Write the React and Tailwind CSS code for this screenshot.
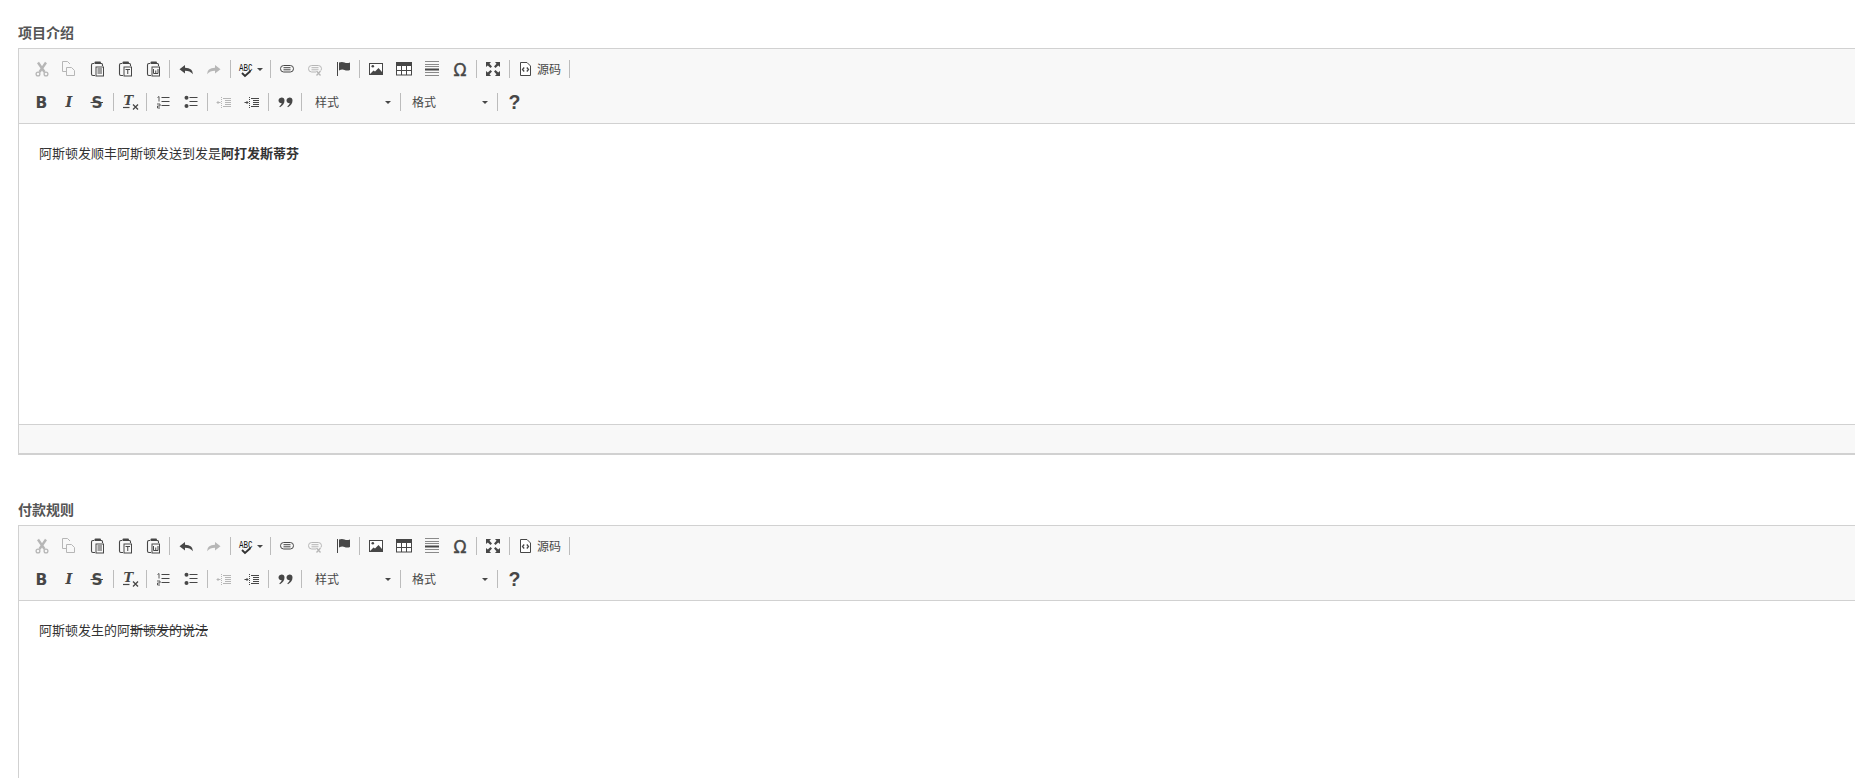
import React from "react";

const C = "#474747";
const D = "#222";
const I = ({ children, off }) => (
  <svg width="16" height="16" viewBox="0 0 16 16" fill="none" className={`overflow-visible ${off ? "opacity-30" : ""}`}>
    {children}
  </svg>
);
const G = ({ x, y, size, family = "DejaVu Sans", weight = "bold", style = "normal", stroke, children }) => (
  <text x={x} y={y} fontSize={size} fontFamily={family} fontWeight={weight} fontStyle={style} fill={C} stroke={stroke} strokeWidth={stroke ? 0.35 : undefined}>
    {children}
  </text>
);

const Cut = () => (
  <I off>
    <path d="M5 1.500l6.500 9.500M13 1.500L6.500 11" stroke={D} strokeWidth="2.400" />
    <circle cx="5" cy="13" r="1.900" stroke={D} strokeWidth="1.300" />
    <circle cx="13" cy="13" r="1.900" stroke={D} strokeWidth="1.300" />
  </I>
);
const Copy = () => (
  <I off>
    <path d="M5 10.500H1.500V.5H6.500L9 3" stroke={D} />
    <path d="M5.500 6.500V14.500H13.500V9.500L10.500 6.500Z" stroke={D} />
  </I>
);
const Clip = ({ children }) => (
  <I>
    <path d="M5 2.500H4Q2.500 2.500 2.500 4v9Q2.500 14.500 4 14.500h2" stroke={C} strokeWidth="1.100" />
    <path d="M12 2.500h.5Q13.500 2.500 13.500 4v1" stroke={C} strokeWidth="1.100" />
    <path d="M5.500 3V1.500Q5.500.5 6.500.5h4.500Q12 .5 12 1.500V3z" fill={C} />
    <rect x="7" y="6" width="7.500" height="9" fill="#f8f8f8" stroke={C} />
    {children}
  </I>
);
const Paste = () => (
  <Clip>
    <path d="M8.500 8h4.500M8.500 10h4.500M8.500 12h4.500" stroke={C} />
  </Clip>
);
const PasteT = () => (
  <Clip>
    <path d="M8.500 8.500h4.500M10.750 8.500v4.500" stroke={C} />
  </Clip>
);
const PasteW = () => (
  <Clip>
    <path d="M8.500 8v4.500h4.500V8M10.750 9.500v3" stroke={C} />
  </Clip>
);
const Undo = () => (
  <I>
    <path d="M7 4L1.500 8.200 7 12.500V9.800q5 0 8 3.400Q15 6.800 7 6.700z" fill={C} />
  </I>
);
const Redo = () => (
  <I off>
    <path d="M9 4l5.500 4.200L9 12.500V9.800q-5 0-8 3.400Q1 6.800 9 6.700z" fill={D} />
  </I>
);
const Spell = () => (
  <I>
    <text x="1" y="9.500" fontSize="10.500" textLength="13.500" lengthAdjust="spacingAndGlyphs" fontFamily="Liberation Mono" fill="#111">ABC</text>
    <path d="M4 12l3 3 5.500-5" stroke="#333" strokeWidth="1.900" />
  </I>
);
const Link = ({ off }) => (
  <I off={off}>
    <rect x="1.500" y="4.500" width="13" height="6.500" rx="3.200" stroke={off ? D : C} />
    <path d="M4.500 6.700h7M4.500 8.800h7" stroke={off ? D : C} />
    {off && (
      <>
        <rect x="9" y="9.500" width="6" height="6" fill="#f8f8f8" />
        <path d="M9.500 10l4 4.500M13.500 10l-4 4.500" stroke={D} strokeWidth="1.300" />
      </>
    )}
  </I>
);
const Flag = () => (
  <I>
    <path d="M2.500 1v14" stroke={C} />
    <path d="M4 1.500q3-1 5.500 0T15 1.500v7.500q-3 1-5.500 0T4 9.500z" fill={C} />
  </I>
);
const Image = () => (
  <I>
    <rect x="1.500" y="2.500" width="13" height="11" stroke={C} fill="#fff" />
    <path d="M2 13l3.500-3.500 1.500 1L10.500 7 14 11v2z" fill={C} />
    <circle cx="4.800" cy="5.300" r="1.300" fill={C} />
  </I>
);
const Table = () => (
  <I>
    <rect x=".5" y="1.500" width="15" height="12.500" stroke={C} fill="#fff" />
    <rect x="0" y="1" width="16" height="4" fill={C} />
    <path d="M5.500 5v9M10.500 5v9M1 9.500h14" stroke={C} />
  </I>
);
const Hr = () => (
  <I>
    <path d="M1 .5h14M1 3.500h14M1 5.500h14M1 11.500h14M1 14.500h14" stroke="#8a8a8a" />
    <path d="M1 8.500h14" stroke={C} strokeWidth="2" />
  </I>
);
const Omega = () => (
  <I>
    <G x="1.500" y="15" size="17" weight="normal" stroke={C}>Ω</G>
  </I>
);
const Max = () => (
  <I>
    <path d="M1 1h5L4.500 2.800 7 5.500 5.500 7 2.800 4.500 1 6zM15 1v5l-1.800-1.500L10.500 7 9 5.500l2.500-2.700L10 1zM1 15v-5l1.800 1.500L5.500 9 7 10.500l-2.500 2.700L6 15zM15 15h-5l1.500-1.800L9 10.500 10.500 9l2.700 2.500L15 10z" fill={C} />
  </I>
);
const Source = () => (
  <I>
    <path d="M3.500 1.500h6.500l3.500 3.500v9.500h-10z" stroke={C} fill="#fff" />
    <path d="M7.200 6.500L5.500 8.500l1.700 2M9.800 6.500l1.700 2-1.700 2" stroke={C} strokeWidth="1.300" />
  </I>
);
const Bold = () => (
  <I>
    <G x="2.500" y="13.500" size="15.500">B</G>
  </I>
);
const Italic = () => (
  <I>
    <G x="4.500" y="13.200" size="14.500" family="DejaVu Serif" style="italic">I</G>
  </I>
);
const Strike = () => (
  <I>
    <G x="2.500" y="13.500" size="15.500">S</G>
    <path d="M1.500 8.500h12.500" stroke={C} />
  </I>
);
const RemoveFormat = () => (
  <I>
    <G x="1.500" y="11" size="13" family="DejaVu Serif" style="italic">T</G>
    <path d="M1 13.500h6.500" stroke={C} strokeWidth="1.200" />
    <path d="M11 10.500l5 5M16 10.500l-5 5" stroke={C} strokeWidth="1.300" />
  </I>
);
const Ol = () => (
  <I>
    <path d="M6.500 3.500h8M6.500 7.500h8M6.500 11.500h8" stroke={C} strokeWidth="1.100" />
    <path d="M2.500 3.500l1.500-1v5" stroke={C} strokeWidth=".9" />
    <path d="M2 10h3v2H2.500v2H5" stroke={C} strokeWidth=".9" />
  </I>
);
const Ul = () => (
  <I>
    <circle cx="3.500" cy="3.800" r="2" fill={C} />
    <circle cx="3.500" cy="12" r="2" fill={C} />
    <path d="M6.500 3.500h8M6.500 7.500h8M6.500 11.500h8" stroke={C} strokeWidth="1.100" />
  </I>
);
const Dent = ({ off, arrow }) => (
  <I off={off}>
    <path d="M7 4.500h8M9 6.500h6M9 8.500h6M9 10.500h6M7 12.500h8" stroke={off ? D : C} />
    <path d="M5.500 3v11" stroke={off ? D : C} strokeDasharray="1 1" />
    <path d={arrow} stroke={off ? D : C} />
  </I>
);
const Outdent = () => <Dent off arrow="M4.500 8.500H1M2.500 7L1 8.500 2.500 10" />;
const Indent = () => <Dent arrow="M.5 8.500H4M2.500 7L4 8.500 2.500 10" />;
const Quote = () => (
  <I>
    <path d="M4.500 3.500q3 0 3 3 0 4-4.500 6.800l-.7-.9q2.200-1.700 2.500-3.100Q1.500 9 1.500 6.500t3-3zM12.500 3.500q3 0 3 3 0 4-4.500 6.800l-.7-.9q2.200-1.700 2.500-3.100-3.300-.3-3.300-2.800t3-3z" fill={C} />
  </I>
);
const Help = () => (
  <I>
    <G x="2.500" y="15" size="19.500" family="Liberation Sans">?</G>
  </I>
);

const Btn = ({ children }) => (
  <span className="flex h-[24px] w-[28px] shrink-0 items-center justify-center">{children}</span>
);
const Sep = ({ ml = "ml-[2px]", mr = "mr-[2px]" }) => (
  <span className={`h-[18px] w-[1px] shrink-0 bg-[#bcbcbc] ${ml} ${mr}`} />
);
const Caret = () => (
  <span className="h-0 w-0 border-x-[3px] border-t-[3px] border-x-transparent border-t-[#474747]" />
);
const Combo = ({ label, w, pl }) => (
  <span className={`flex h-[24px] shrink-0 items-center justify-between pr-[9px] text-[12px] text-[#484848] ${w} ${pl}`}>
    <span>{label}</span>
    <Caret />
  </span>
);
const Toolbar = () => (
  <div className="flex h-[75px] flex-col gap-[9px] border-b border-[#d1d1d1] bg-[#f8f8f8] pl-[8px] pt-[8px]">
    <div className="flex h-[24px] items-center">
      <Btn><Cut /></Btn><Btn><Copy /></Btn><Btn><Paste /></Btn><Btn><PasteT /></Btn><Btn><PasteW /></Btn>
      <Sep />
      <Btn><Undo /></Btn><Btn><Redo /></Btn>
      <Sep />
      <span className="flex h-[24px] w-[35px] shrink-0 items-center gap-[3px] pl-[5px]">
        <Spell />
        <Caret />
      </span>
      <Sep />
      <Btn><Link /></Btn><Btn><Link off /></Btn><Btn><Flag /></Btn>
      <Sep />
      <Btn><Image /></Btn><Btn><Table /></Btn><Btn><Hr /></Btn><Btn><Omega /></Btn>
      <Sep />
      <Btn><Max /></Btn>
      <Sep />
      <span className="flex h-[24px] w-[55px] shrink-0 items-center gap-[4px] pl-[5px] text-[12px] text-[#484848]">
        <Source />
        <span>源码</span>
      </span>
      <Sep />
    </div>
    <div className="flex h-[24px] items-center">
      <Btn><Bold /></Btn><Btn><Italic /></Btn><Btn><Strike /></Btn>
      <Sep />
      <Btn><RemoveFormat /></Btn>
      <Sep />
      <Btn><Ol /></Btn><Btn><Ul /></Btn>
      <Sep />
      <Btn><Outdent /></Btn><Btn><Indent /></Btn>
      <Sep />
      <Btn><Quote /></Btn>
      <Sep mr="mr-[0px]" />
      <Combo label="样式" w="w-[98px]" pl="pl-[13px]" />
      <Sep ml="ml-[0px]" mr="mr-[0px]" />
      <Combo label="格式" w="w-[96px]" pl="pl-[11px]" />
      <Sep ml="ml-[0px]" />
      <Btn><Help /></Btn>
    </div>
  </div>
);

const Label = ({ children, className = "" }) => (
  <div className={`mb-[6px] h-[20px] text-[14px] font-bold leading-[20px] text-[#555] ${className}`}>{children}</div>
);

export default function App() {
  return (
    <div className="h-[778px] w-[1855px] overflow-hidden bg-white pl-[18px] pt-[22px] font-['Noto_Sans_CJK_SC','Noto_Sans',sans-serif]">
      <div className="w-[1900px]">
        <Label>项目介绍</Label>
        <div className="border border-b-2 border-[#d1d1d1]">
          <Toolbar />
          <div className="h-[300px] px-[20px] pt-[19px] text-[13px] leading-[20px] text-[#333]">
            阿斯顿发顺丰阿斯顿发送到发是<strong className="font-bold">阿打发斯蒂芬</strong>
          </div>
          <div className="h-[29px] border-t border-[#d1d1d1] bg-[#f8f8f8]" />
        </div>
        <Label className="mt-[44px]">付款规则</Label>
        <div className="border border-[#d1d1d1]">
          <Toolbar />
          <div className="h-[300px] px-[20px] pt-[19px] text-[13px] leading-[20px] text-[#333]">
            阿斯顿发生的阿<s>斯顿发的说法</s>
          </div>
        </div>
      </div>
    </div>
  );
}
